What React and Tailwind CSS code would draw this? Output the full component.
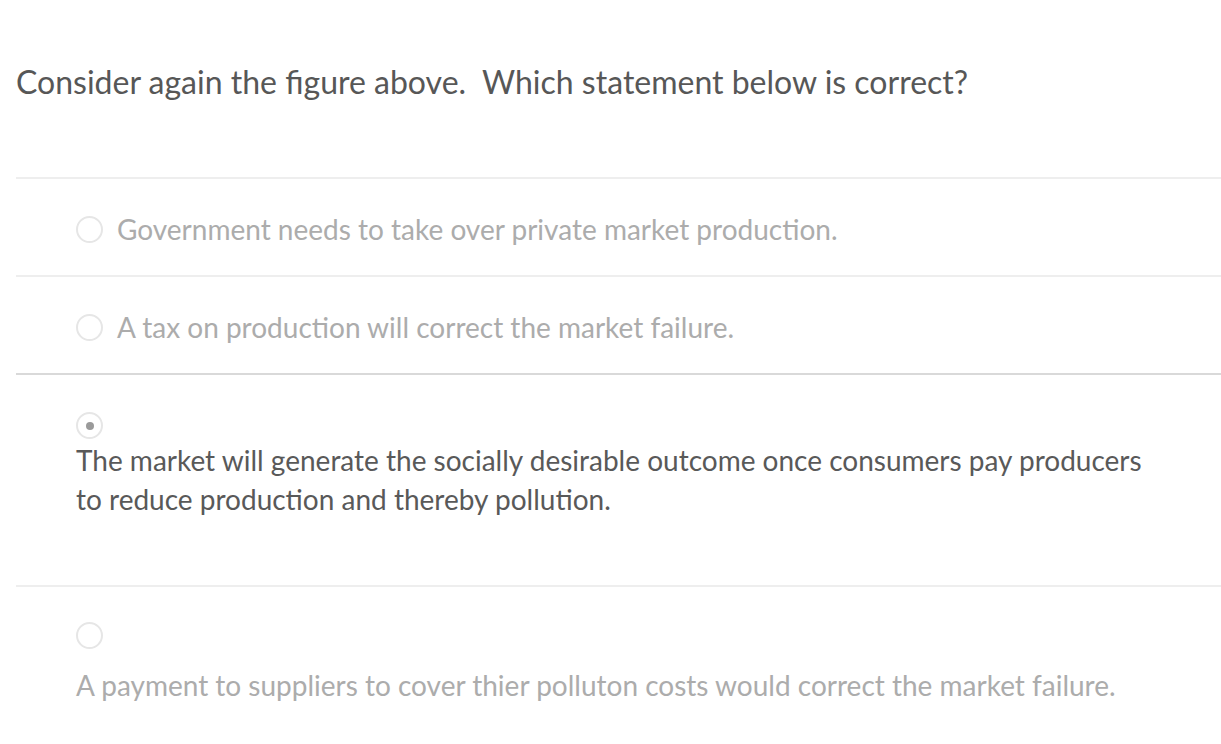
import React from 'react';

const FONT = { fontFamily: 'Lato, "Open Sans", sans-serif' };

function Radio({ checked }) {
  return (
    <span className="flex h-[27px] w-[27px] shrink-0 items-center justify-center rounded-full border-2 border-[#e6e6e6] bg-white">
      {checked && <span className="h-[8px] w-[8px] rounded-full bg-[#9a9a9a]" />}
    </span>
  );
}

export default function App() {
  return (
    <div className="min-h-[744px] bg-white pl-4 pr-0" style={FONT}>
      <h1 className="pt-[62px] pb-[75px] text-[32px] leading-[40px] font-normal text-[#575757]">
        Consider again the figure above.&nbsp; Which statement below is correct?
      </h1>

      <div className="border-t-2 border-[#eeeeee]">
        <div className="flex items-center gap-[14px] pl-[60px] pt-[31px] pb-[26px] text-[28px] leading-[39px] text-[#acacac]">
          <Radio />
          <span>Government needs to take over private market production.</span>
        </div>
      </div>

      <div className="border-t-2 border-[#eeeeee]">
        <div className="flex items-center gap-[14px] pl-[60px] pt-[31px] pb-[26px] text-[28px] leading-[39px] text-[#acacac]">
          <Radio />
          <span>A tax on production will correct the market failure.</span>
        </div>
      </div>

      <div className="border-t-2 border-[#d9d9d9]">
        <div className="pl-[60px] pt-[37px] pb-[66px] text-[28px] leading-[39px] text-[#595959]">
          <Radio checked />
          <p className="mt-[2px]">
            The market will generate the socially desirable outcome once consumers pay producers
            <br />
            to reduce production and thereby pollution.
          </p>
        </div>
      </div>

      <div className="border-t-2 border-[#eeeeee]">
        <div className="pl-[60px] pt-[35px] pb-[30px] text-[28px] leading-[39px] text-[#acacac]">
          <Radio />
          <p className="mt-[17px]">
            A payment to suppliers to cover thier polluton costs would correct the market failure.
          </p>
        </div>
      </div>
    </div>
  );
}
